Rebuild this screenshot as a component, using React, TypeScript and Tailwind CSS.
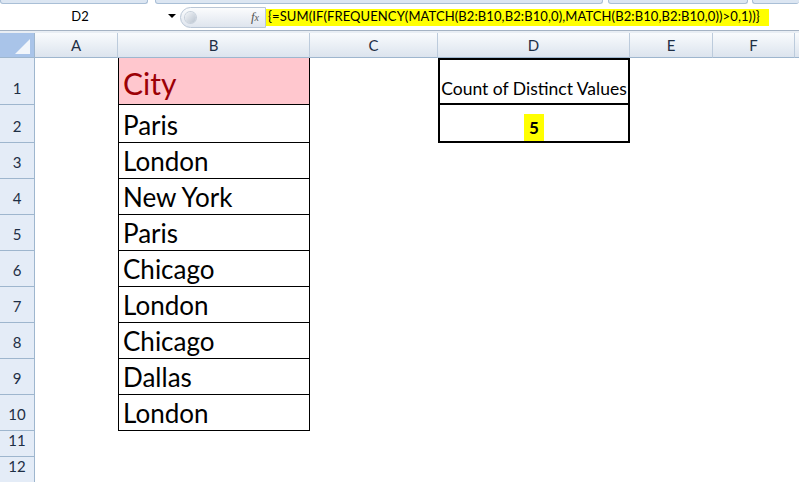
import React from 'react';

const font = { fontFamily: 'Lato, "Open Sans", "Noto Sans", sans-serif' };

const cities = ['Paris', 'London', 'New York', 'Paris', 'Chicago', 'London', 'Chicago', 'Dallas', 'London'];

const cols = ['A', 'B', 'C', 'D', 'E', 'F'];

/* ─── Ribbon remnants + formula bar ─────────────────────────────── */

function FormulaBar() {
  return (
    <div>
      <div className="flex h-[4px] bg-white">
        <div className="w-[148px] rounded-b-[3px] border border-t-0 border-[#a9bfd6] bg-[#dce6f2]" />
        <div className="ml-[7px] w-[448px] rounded-b-[3px] border border-t-0 border-[#a9bfd6] bg-[#dce6f2]" />
        <div className="ml-[5px] w-[140px] rounded-b-[3px] border border-t-0 border-[#a9bfd6] bg-[#dce6f2]" />
        <div className="ml-[4px] flex-1 rounded-b-[3px] border border-t-0 border-r-0 border-[#a9bfd6] bg-[#dce6f2]" />
      </div>
      <div className="flex h-[26px] items-center bg-white">
        <div className="relative flex h-full w-[180px] items-center justify-center text-[13px] text-black">
          <span className="-ml-[20px]">D2</span>
          <span className="absolute right-[4px] top-[10px] h-0 w-0 border-x-[4px] border-t-[4px] border-x-transparent border-t-black" />
        </div>
        <div className="relative flex h-[21px] w-[86px] items-center rounded-l-full border border-[#b9c6d6] bg-gradient-to-b from-[#fbfcfd] to-[#dfe5ee]">
          <span className="ml-[4px] h-[11px] w-[11px] rounded-full bg-gradient-to-br from-[#f4f6f9] to-[#b9c3cf] shadow-[0_0_0_1px_#c7d0db]" />
          <span
            className="ml-auto mr-[6px] text-[13px] italic text-[#555]"
            style={{ fontFamily: '"Liberation Serif", serif' }}
          >
            f<span className="text-[10px]">x</span>
          </span>
        </div>
        <div className="flex h-full flex-1 items-center">
          <span className="flex h-[17px] w-[503px] items-center bg-[#ffff00] pl-[2px] text-[13px] tracking-[0.1px] text-black">
            {'{=SUM(IF(FREQUENCY(MATCH(B2:B10,B2:B10,0),MATCH(B2:B10,B2:B10,0))>0,1))}'}
          </span>
        </div>
      </div>
      <div className="h-[1px] bg-[#a5b3c4]" />
      <div className="h-[2px] bg-[#e9eef4]" />
    </div>
  );
}

/* ─── Sheet grid ───────────────────────────────────────────────── */

const rowHeights = [47, 38, 36, 36, 36, 36, 36, 36, 36, 36, 26, 26];

function RowHead({ n, h }: { n: number; h: number }) {
  return (
    <div
      className="flex items-end justify-center border-b border-r border-[#9eb6ce] bg-[#e4ecf7] pb-[5px] text-[15px] text-[#1e2f45]"
      style={{ height: h }}
    >
      {n}
    </div>
  );
}

export default function App() {
  return (
    <div className="h-[482px] w-[799px] overflow-hidden bg-white" style={font}>
      <FormulaBar />
      <div className="grid grid-cols-[35px_83px_192px_128px_192px_83px_82px_4px]">
        {/* header row */}
        <div className="relative h-[25px] border-b border-r border-[#9eb6ce] bg-[#a9c4e9]">
          <span className="absolute bottom-[3px] right-[4px] h-0 w-0 border-b-[15px] border-l-[15px] border-b-[#f2f6fb] border-l-transparent" />
        </div>
        {cols.map((c) => (
          <div
            key={c}
            className="flex h-[25px] items-center justify-center border-b border-r border-b-[#9eb6ce] border-r-[#bccbdc] bg-gradient-to-b from-[#f9fbfd] to-[#dce4ee] text-[15px] text-[#1e2f45]"
          >
            {c}
          </div>
        ))}
        <div className="h-[25px] border-b border-[#9eb6ce] bg-gradient-to-b from-[#f9fbfd] to-[#dce4ee]" />

        {rowHeights.map((h, i) => {
          const n = i + 1;
          const city = n === 1 ? 'City' : n <= 10 ? cities[n - 2] : null;
          return (
            <React.Fragment key={n}>
              <RowHead n={n} h={h} />
              <div />
              {n === 1 ? (
                <div className="flex items-end border-x border-b border-black bg-[#ffc7ce] pb-[6px] pl-[4px] text-[30px] leading-none text-[#9c0006]">
                  City
                </div>
              ) : city ? (
                <div className="flex items-end border-x border-b border-black pb-[4px] pl-[4px] text-[26px] leading-none text-black">
                  {city}
                </div>
              ) : (
                <div />
              )}
              <div />
              {n === 1 ? (
                <div className="flex items-end justify-center border-2 border-black pb-[6px] text-[17.5px] leading-none text-black">
                  Count of Distinct Values
                </div>
              ) : n === 2 ? (
                <div className="flex items-end justify-center border-x-2 border-b-2 border-black">
                  <span className="flex h-[27px] w-[20px] items-center justify-center bg-[#ffff00] text-[17px] font-bold text-black">
                    5
                  </span>
                </div>
              ) : (
                <div />
              )}
              <div />
              <div />
              <div />
            </React.Fragment>
          );
        })}
      </div>
    </div>
  );
}
